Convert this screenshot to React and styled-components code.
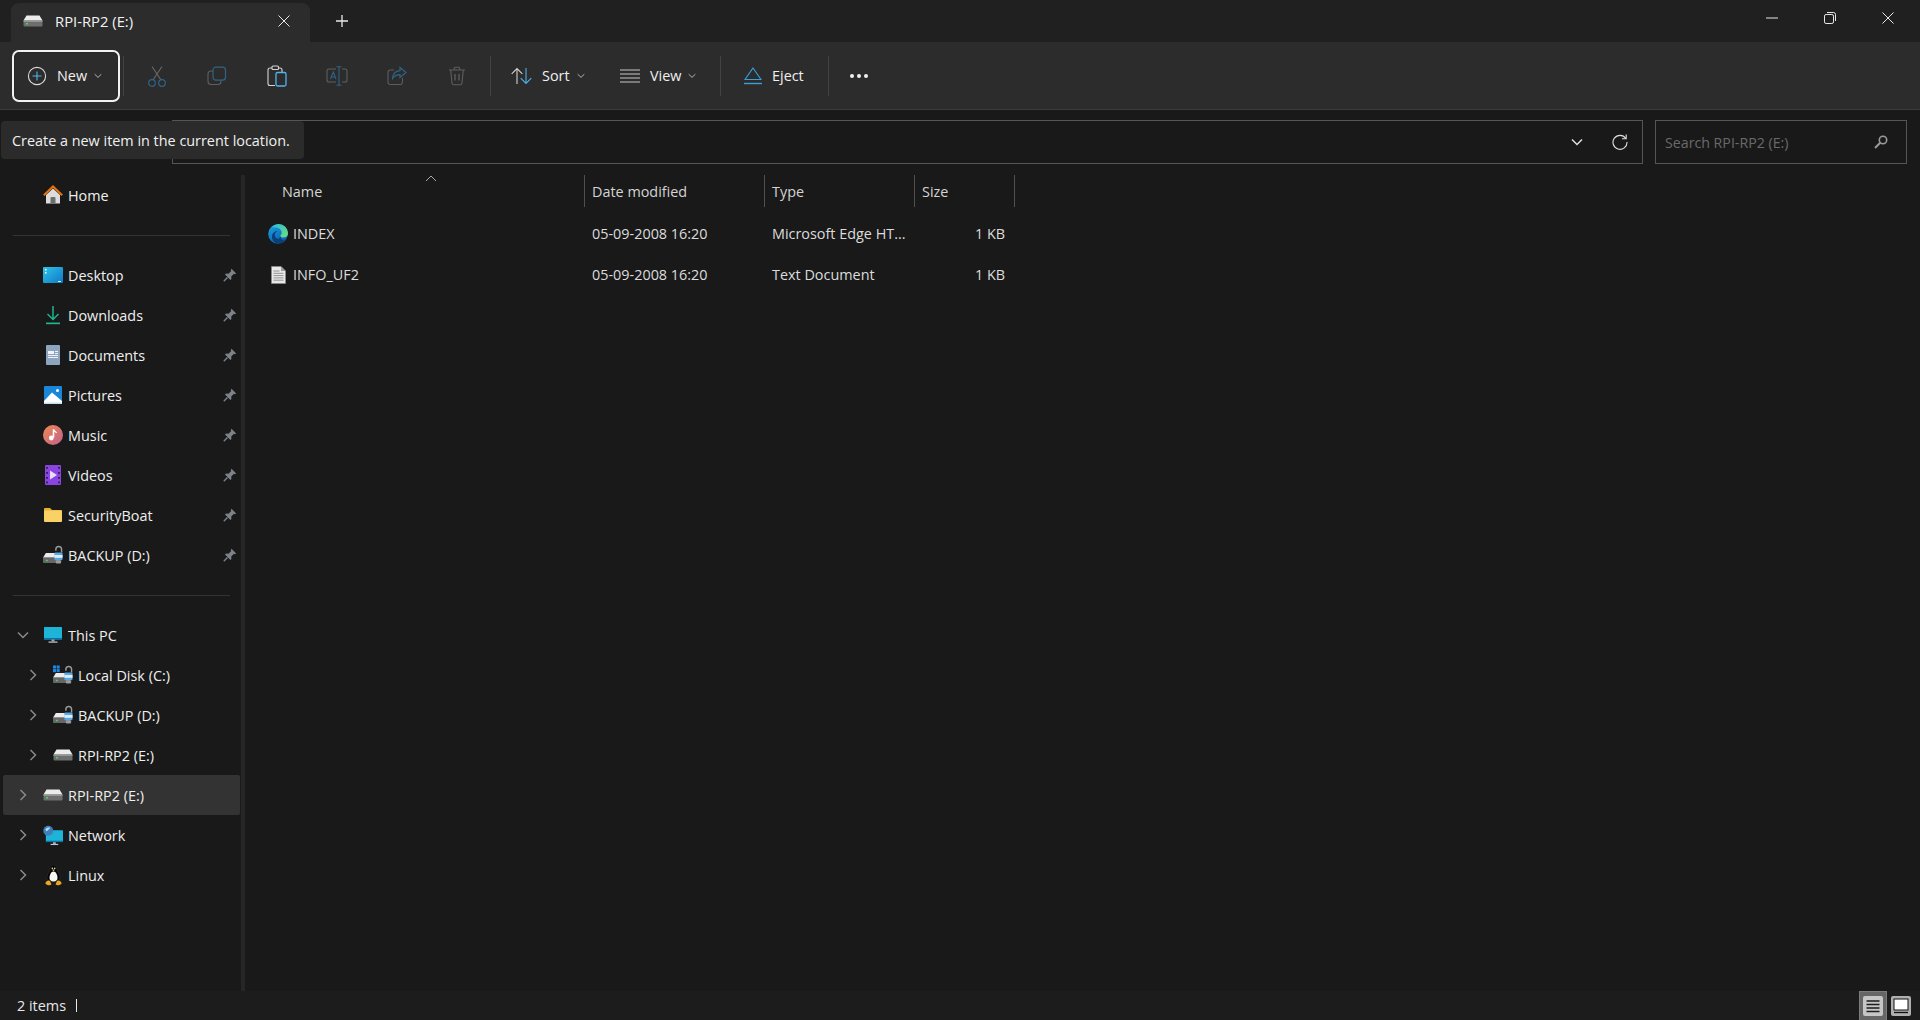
import React from 'react'
import styled, { createGlobalStyle } from 'styled-components'

const GlobalStyle = createGlobalStyle`
  html, body, #root {
    margin: 0;
    height: 100%;
  }
  body {
    background: #191919;
    overflow: hidden;
    font-family: 'Open Sans', 'Noto Sans', sans-serif;
    font-size: 14.4px;
    color: #f0f0f0;
  }
`

const Window = styled.div`
  position: relative;
  width: 1920px;
  height: 1020px;
  display: flex;
  flex-direction: column;
  background: #191919;
`

const TitleBar = styled.div`
  height: 42px;
  flex: none;
  display: flex;
  background: #202020;
  padding: 3px 3px 0 11px;
  box-sizing: border-box;
`

const Tab = styled.div`
  width: 299px;
  display: flex;
  align-items: center;
  background: #2c2c2c;
  border-radius: 8px 8px 0 0;
  padding: 0 20px 3px 12px;
  box-sizing: border-box;
`

const TabLabel = styled.span`
  margin-left: 12px;
  flex: 1;
  font-size: 14.8px;
  font-weight: 500;
  color: #f2f2f2;
`

const NewTab = styled.div`
  width: 64px;
  display: flex;
  align-items: center;
  justify-content: center;
  padding-bottom: 3px;
`

const WindowControls = styled.div`
  margin-left: auto;
  display: flex;
  margin-top: -3px;
`

const ControlButton = styled.div`
  width: 58px;
  height: 36px;
  display: flex;
  align-items: center;
  justify-content: center;
`

const Toolbar = styled.div`
  height: 68px;
  flex: none;
  display: flex;
  align-items: center;
  background: #2c2c2c;
  border-bottom: 1px solid #3c3c3c;
  box-sizing: border-box;
  padding-left: 12px;
`

const NewButton = styled.div`
  width: 108px;
  height: 52px;
  box-sizing: border-box;
  display: flex;
  align-items: center;
  gap: 10px;
  padding-left: 13px;
  border: 2px solid #f2f2f2;
  border-radius: 7px;
  box-shadow: 0 0 1px #000 inset;
`

const Divider = styled.div`
  width: 1px;
  height: 40px;
  background: #434343;
  margin: 0 ${(p) => p.$gap || 0}px;
  flex: none;
`

const IconButton = styled.div`
  width: 60px;
  height: 52px;
  flex: none;
  display: flex;
  align-items: center;
  justify-content: center;
`

const MenuButton = styled.div`
  width: ${(p) => p.$width}px;
  height: 52px;
  flex: none;
  box-sizing: border-box;
  padding-left: ${(p) => p.$pad}px;
  display: flex;
  align-items: center;
  gap: ${(p) => p.$gap}px;
`

const Label = styled.span`
  font-size: 14.4px;
  color: #f0f0f0;
`

const CaretSlot = styled.span`
  display: flex;
  margin-left: -3px;
`

const AddressRow = styled.div`
  height: 65px;
  flex: none;
  display: flex;
  align-items: flex-start;
  padding: 10px 13px 0 172px;
  box-sizing: border-box;
  gap: 12px;
`

const AddressBox = styled.div`
  width: 1471px;
  height: 44px;
  box-sizing: border-box;
  border: 1px solid #555;
  display: flex;
  align-items: center;
  justify-content: flex-end;
  gap: 29px;
  padding: 0 14px 0 0;
`

const SearchBox = styled.div`
  width: 252px;
  height: 44px;
  box-sizing: border-box;
  border: 1px solid #555;
  display: flex;
  align-items: center;
  justify-content: space-between;
  padding: 0 18px 0 9px;
  color: #6a6a6a;
  font-size: 14.2px;
`

const Tooltip = styled.div`
  position: absolute;
  left: 1px;
  top: 121px;
  width: 303px;
  height: 38px;
  box-sizing: border-box;
  display: flex;
  align-items: center;
  padding-left: 11px;
  background: #2b2b2b;
  border-radius: 4px;
  font-size: 14.4px;
  color: #f0f0f0;
  white-space: nowrap;
`

const Body = styled.div`
  flex: 1;
  min-height: 0;
  display: flex;
`

const Sidebar = styled.div`
  width: 245px;
  flex: none;
  box-sizing: border-box;
  border-right: 4px solid #262626;
  padding: 0 0 0 3px;
`

const NavRow = styled.div`
  height: 40px;
  width: 237px;
  box-sizing: border-box;
  display: flex;
  align-items: center;
  padding-left: ${(p) => (p.$level ? 20 : 10)}px;
  padding-right: 3px;
  border-radius: 2px;
  background: ${(p) => (p.$selected ? '#333333' : 'transparent')};
`

const Chevron = styled.div`
  width: 20px;
  flex: none;
  display: flex;
  align-items: center;
  justify-content: center;
`

const NavIcon = styled.div`
  width: 20px;
  height: 20px;
  margin-left: 10px;
  flex: none;
  display: flex;
  align-items: center;
  justify-content: center;
`

const NavText = styled.span`
  margin-left: 5px;
  flex: 1;
  font-size: 14.4px;
  color: #efefef;
  white-space: nowrap;
`

const NavDivider = styled.div`
  height: 1px;
  width: 217px;
  margin: 20px 0 19px 10px;
  background: #333;
`

const Content = styled.div`
  flex: 1;
`

const ColumnGrid = styled.div`
  display: grid;
  grid-template-columns: 340px 180px 150px 100px;
  align-items: center;
`

const Header = styled(ColumnGrid)`
  position: relative;
  height: 32px;
  margin-bottom: 6px;
  color: #d4d4d4;
`

const HeaderCell = styled.div`
  height: 32px;
  display: flex;
  align-items: center;
  padding-left: ${(p) => p.$pad}px;
  border-right: 1px solid #505050;
  font-size: 14.4px;
`

const SortCaret = styled.div`
  position: absolute;
  left: 180px;
  top: 0;
  line-height: 0;
`

const FileRow = styled(ColumnGrid)`
  height: 41px;
  color: #dcdcdc;
  font-size: 14.4px;
`

const NameCell = styled.div`
  display: flex;
  align-items: center;
  gap: 5px;
  padding-left: 23px;
`

const FileIcon = styled.div`
  width: 20px;
  height: 20px;
  display: flex;
  align-items: center;
  justify-content: center;
`

const TextCell = styled.div`
  padding-left: 7px;
  white-space: nowrap;
`

const SizeCell = styled.div`
  text-align: right;
  padding-right: 10px;
`

const StatusBar = styled.div`
  height: 29px;
  flex: none;
  display: flex;
  align-items: center;
  background: #1c1c1c;
  padding-left: 17px;
  font-size: 14.4px;
  color: #e8e8e8;
`

const StatusRule = styled.div`
  width: 1px;
  height: 13px;
  background: #e8e8e8;
  margin-left: 10px;
`

const ViewToggles = styled.div`
  margin-left: auto;
  display: flex;
  align-items: center;
  gap: 4px;
  padding-right: 9px;
`

const ViewToggle = styled.div`
  width: ${(p) => (p.$active ? 28 : 20)}px;
  height: 29px;
  box-sizing: border-box;
  display: flex;
  align-items: center;
  justify-content: center;
  background: ${(p) => (p.$active ? '#666' : 'transparent')};
  border: ${(p) => (p.$active ? '1px solid #7c7c7c' : 'none')};
  border-bottom: none;
`

const Svg = ({ size = 20, w, h, children }) => (
  <svg width={w || size} height={h || size} viewBox={`0 0 ${w || size} ${h || size}`} fill="none">
    {children}
  </svg>
)

const DriveIcon = () => (
  <Svg w={20} h={12}>
    <path d="M3.5 0.5h13L19.5 5.5H.5z" fill="#ececec" />
    <rect x="0.5" y="5.5" width="19" height="6" rx="1" fill="#6e6e6e" />
    <rect x="0.5" y="5.5" width="19" height="1" fill="#bdbdbd" />
    <rect x="3" y="8" width="2" height="1.5" fill="#3ddc5e" />
  </Svg>
)

const LockedDriveIcon = ({ windows }) => (
  <Svg w={21} h={20}>
    <path d="M3 8h12l3 5H0z" fill="#ececec" />
    <rect x="0" y="12.5" width="18" height="6" rx="1" fill="#666" />
    <rect x="3" y="15" width="2" height="1.5" fill="#3ddc5e" />
    <path d="M13.5 5.5V4a3 3 0 0 1 6 0v3.500" stroke="#9a9a9a" strokeWidth="1.5" />
    <rect x="12" y="7.500" width="8.500" height="8" rx="1" fill="#58a8e4" />
    <rect x="12" y="10" width="8.500" height="3" fill="#dcecf8" />
    <rect x="13.500" y="15.500" width="5.500" height="3.500" rx="1" fill="#9c9c9c" />
    {windows && (
      <g fill="#1e88e5">
        <rect x="0" y="0" width="3.200" height="3.200" />
        <rect x="3.800" y="0" width="3.200" height="3.200" />
        <rect x="0" y="3.800" width="3.200" height="3.200" />
        <rect x="3.800" y="3.800" width="3.200" height="3.200" />
      </g>
    )}
  </Svg>
)

const HomeIcon = () => (
  <Svg>
    <path d="M3 10v8.5h14V10L10 3.5z" fill="#dcdcdc" />
    <path d="M7.5 18.5V13a1 1 0 0 1 1-1h3a1 1 0 0 1 1 1v5.5z" fill="#6d6d6d" />
    <path d="M0.8 10.2 10 1.5l9.2 8.7" stroke="#e8730c" strokeWidth="2" />
  </Svg>
)

const DesktopIcon = () => (
  <Svg w={20} h={16}>
    <defs>
      <linearGradient id="deskFill" x1="0" y1="0" x2="1" y2="1">
        <stop offset="0" stopColor="#2cc4e8" />
        <stop offset="1" stopColor="#0f78c8" />
      </linearGradient>
    </defs>
    <rect y="0" width="20" height="16" rx="1" fill="url(#deskFill)" />
    <rect x="2" y="2" width="1.5" height="1.5" fill="#fff" />
    <rect x="2" y="5" width="1.5" height="1.5" fill="#fff" />
    <rect x="15" y="14" width="3" height="1" fill="#dff" />
  </Svg>
)

const DownloadIcon = () => (
  <Svg>
    <path d="M10 1v13M4.5 9 10 14.5 15.5 9" stroke="#1fb48e" strokeWidth="1.5" />
    <rect x="3" y="17.5" width="14" height="1.7" fill="#1fb48e" />
  </Svg>
)

const DocumentsIcon = () => (
  <Svg w={14} h={20}>
    <rect width="14" height="20" rx="1" fill="#8ca4be" />
    <rect x="2" y="6" width="6" height="3" fill="#f0f4f8" />
    <rect x="9" y="6" width="3" height="1" fill="#f0f4f8" />
    <rect x="9" y="8" width="3" height="1" fill="#f0f4f8" />
    <rect x="2" y="10" width="10" height="1" fill="#f0f4f8" />
    <rect x="2" y="12" width="10" height="1" fill="#f0f4f8" />
  </Svg>
)

const PicturesIcon = () => (
  <Svg w={18} h={18}>
    <rect width="18" height="18" rx="1" fill="#1a86d8" />
    <circle cx="13.5" cy="4.5" r="1.5" fill="#fff" />
    <path d="M0 15 8 6.5 18 15v3H0z" fill="#fff" />
    <path d="M0 16.5 18 16.5V18H0z" fill="#bfe0f6" />
  </Svg>
)

const MusicIcon = () => (
  <Svg>
    <defs>
      <linearGradient id="musicFill" x1="0" y1="0" x2="1" y2="1">
        <stop offset="0" stopColor="#ee8a50" />
        <stop offset="1" stopColor="#c2608e" />
      </linearGradient>
    </defs>
    <circle cx="10" cy="10" r="10" fill="url(#musicFill)" />
    <path d="M10.5 4.5v8" stroke="#fff" strokeWidth="1.6" />
    <path d="M10.5 4.5c.5 2 2.5 2 3 3.5" stroke="#fff" strokeWidth="1.3" />
    <circle cx="8.3" cy="13" r="2.4" fill="#fff" />
  </Svg>
)

const VideosIcon = () => (
  <Svg w={16} h={20}>
    <rect width="16" height="20" rx="1" fill="#8a44e0" />
    <g fill="#2a1a44">
      <rect x="1.2" y="2" width="1.6" height="1.8" />
      <rect x="1.2" y="7" width="1.6" height="1.8" />
      <rect x="1.2" y="12" width="1.6" height="1.8" />
      <rect x="1.2" y="16.5" width="1.6" height="1.8" />
      <rect x="13.2" y="2" width="1.6" height="1.8" />
      <rect x="13.2" y="7" width="1.6" height="1.8" />
      <rect x="13.2" y="12" width="1.6" height="1.8" />
      <rect x="13.2" y="16.5" width="1.6" height="1.8" />
    </g>
    <path d="M5 5.5 12 10l-7 4.5z" fill="#e8ddfa" />
  </Svg>
)

const FolderIcon = () => (
  <Svg w={18} h={14}>
    <path d="M0 1a1 1 0 0 1 1-1h5l2 2h9a1 1 0 0 1 1 1v1H0z" fill="#e8b030" />
    <rect y="2.6" width="18" height="11.4" rx="1" fill="#fad165" />
  </Svg>
)

const ThisPcIcon = () => (
  <Svg w={18} h={16}>
    <rect width="18" height="12.5" rx="0.6" fill="#1eb4d8" />
    <rect y="11" width="18" height="1.5" fill="#0e6ea8" />
    <rect x="7.5" y="12.5" width="3" height="2" fill="#9aa8b4" />
    <rect x="4.5" y="14.5" width="9" height="1.2" fill="#c0c8d0" />
  </Svg>
)

const NetworkIcon = () => (
  <Svg w={21} h={21}>
    <rect x="3" y="5" width="18" height="12" rx="0.6" fill="#1eb4d8" />
    <rect x="3" y="16" width="18" height="1.5" fill="#0e6ea8" />
    <rect x="10.5" y="17.5" width="3" height="2" fill="#9aa8b4" />
    <rect x="8" y="19.3" width="8" height="1.2" fill="#c0c8d0" />
    <circle cx="5.5" cy="5.5" r="5.2" fill="#3f7fb8" />
    <path d="M2.5 4C4 2 6 1.6 7.5 2.5 6 4 5 5.5 3.5 6z" fill="#b8dcf2" />
  </Svg>
)

const LinuxIcon = () => (
  <Svg w={17} h={21}>
    <path d="M8.5 0C6 0 5 2 5 4.500c0 2-2.500 4-3 7-.3 2 .5 4 2 5h9c1.500-1 2.300-3 2-5-.5-3-3-5-3-7C12 2 11 0 8.500 0z" fill="#050505" stroke="#3a3a3a" strokeWidth="0.5" />
    <path d="M8.500 6.500c-2.500 0-4 3.500-4 6.500 0 2 1.500 3.500 4 3.500s4-1.500 4-3.500c0-3-1.500-6.500-4-6.500z" fill="#f6f6f6" />
    <circle cx="7.300" cy="3.200" r="0.800" fill="#eee" />
    <circle cx="9.700" cy="3.200" r="0.800" fill="#eee" />
    <path d="M6.800 4.600h3.400L8.500 6.200z" fill="#f0b020" />
    <path d="M0.300 18.500c.7-2.500 3-3.700 4.700-2.500l1.500 3.500c-2.200 1.500-4.500.8-6.200-1zM16.700 18.500c-.7-2.500-3-3.700-4.700-2.500l-1.500 3.500c2.200 1.500 4.500.8 6.200-1z" fill="#eaa81c" />
  </Svg>
)

const PinIcon = () => (
  <Svg size={14}>
    <path d="M8.5.8 13.2 5.5 12 6.2 11 5.8 8.3 8.5l.1 2.5-1 1L2 6.6l1-1 2.5.1 2.7-2.700L7.800 2z" fill="#7c8288" />
    <path d="M4.500 9.500.8 13.200" stroke="#7c8288" strokeWidth="1.400" />
  </Svg>
)

const ChevronIcon = ({ open, color = '#8a8a8a' }) => (
  <Svg w={12} h={12}>
    <path d={open ? 'M1 3.5 6 8.5 11 3.5' : 'M3.5 1 8.5 6 3.5 11'} stroke={color} strokeWidth="1.5" />
  </Svg>
)

const SmallCaret = () => (
  <CaretSlot>
    <Svg w={8} h={6}>
      <path d="M.7 1.2 4 4.400 7.300 1.200" stroke="#b4b4b4" strokeWidth="1" />
    </Svg>
  </CaretSlot>
)

const PlusCircle = () => (
  <Svg>
    <circle cx="10" cy="10" r="8.6" stroke="#d8d8d8" strokeWidth="1.1" />
    <path d="M10 5.5v9M5.5 10h9" stroke="#4fb6ec" strokeWidth="1.1" />
  </Svg>
)

const ScissorsIcon = () => (
  <Svg w={20} h={22}>
    <path d="M5 1.5 14 15M15 1.5 6 15" stroke="#6a6a6a" strokeWidth="1.1" />
    <circle cx="5" cy="18" r="3.3" stroke="#2f6486" strokeWidth="1.2" />
    <circle cx="15" cy="18" r="3.3" stroke="#2f6486" strokeWidth="1.2" />
  </Svg>
)

const CopyIcon = () => (
  <Svg>
    <rect x="1" y="5" width="13" height="13.5" rx="3" stroke="#5e5e5e" strokeWidth="1.1" />
    <rect x="6" y="1.2" width="12.5" height="13" rx="3" fill="#2c2c2c" stroke="#2f6486" strokeWidth="1.2" />
  </Svg>
)

const PasteIcon = () => (
  <Svg w={20} h={22}>
    <path d="M8 20.5H3a2 2 0 0 1-2-2V5a2 2 0 0 1 2-2h10a2 2 0 0 1 2 2v2" stroke="#d4d4d4" strokeWidth="1.1" />
    <rect x="5" y="1" width="6.5" height="3.5" rx="1" fill="#2c2c2c" stroke="#d4d4d4" strokeWidth="1.1" />
    <rect x="9" y="7.5" width="10" height="13.5" rx="1.5" stroke="#4fb6ec" strokeWidth="1.3" />
  </Svg>
)

const RenameIcon = () => (
  <Svg w={22} h={20}>
    <path d="M10 3H3a2 2 0 0 0-2 2v9a2 2 0 0 0 2 2h7M16 3h3a2 2 0 0 1 2 2v9a2 2 0 0 1-2 2h-3" stroke="#5e5e5e" strokeWidth="1.1" />
    <path d="M13 1v18M10.5.8h5M10.5 19.2h5" stroke="#2f6486" strokeWidth="1.1" />
    <path d="M4.500 13 7.300 6l2.700 7M5.400 11h3.800" stroke="#2f6486" strokeWidth="1.1" />
  </Svg>
)

const ShareIcon = () => (
  <Svg w={20} h={20}>
    <path d="M15.5 12v4a2.5 2.5 0 0 1-2.5 2.5H3.5A2.5 2.5 0 0 1 1 16V6.5A2.5 2.5 0 0 1 3.5 4H7" stroke="#5e5e5e" strokeWidth="1.1" />
    <path d="M13 1.5 19 6.5 13 11.5V8.7c-3.6 0-5.6 1.2-7.5 4 .2-4.5 2.8-7.5 7.5-8z" stroke="#2f6486" strokeWidth="1.2" />
  </Svg>
)

const TrashIcon = () => (
  <Svg w={18} h={20}>
    <path d="M1 4h16M6.2 4V2.5a1.3 1.3 0 0 1 1.3-1.3h3a1.3 1.3 0 0 1 1.3 1.3V4" stroke="#5e5e5e" strokeWidth="1.1" />
    <path d="M2.7 4 4 17a2 2 0 0 0 2 1.8h6a2 2 0 0 0 2-1.8L15.3 4" stroke="#5e5e5e" strokeWidth="1.1" />
    <path d="M7 8v6.5M11 8v6.5" stroke="#5e5e5e" strokeWidth="1.3" />
  </Svg>
)

const SortIcon = () => (
  <Svg w={21} h={18}>
    <path d="M6 17V1.5M.7 6.8 6 1.5l5.3 5.3" stroke="#d0d0d0" strokeWidth="1.1" />
    <path d="M15 1v15.5M9.7 11.2 15 16.5l5.3-5.3" stroke="#4fb0e6" strokeWidth="1.1" />
  </Svg>
)

const ViewIcon = () => (
  <Svg w={20} h={14}>
    <path d="M0 1h20M0 5h20M0 9h20M0 13h20" stroke="#c8c8c8" strokeWidth="1.1" />
  </Svg>
)

const EjectIcon = () => (
  <Svg w={18} h={18}>
    <path d="M9 1 17 12.5H1z" stroke="#3c9fd8" strokeWidth="1.1" />
    <path d="M0 16.5h18" stroke="#3c9fd8" strokeWidth="1.4" />
  </Svg>
)

const DotsIcon = () => (
  <Svg w={20} h={4}>
    <circle cx="3" cy="2" r="2" fill="#f2f2f2" />
    <circle cx="10" cy="2" r="2" fill="#f2f2f2" />
    <circle cx="17" cy="2" r="2" fill="#f2f2f2" />
  </Svg>
)

const CloseGlyph = ({ size = 12 }) => (
  <Svg size={size}>
    <path d={`M.5.5 ${size - 0.5} ${size - 0.5}M${size - 0.5} .5 .5 ${size - 0.5}`} stroke="#e8e8e8" strokeWidth="1" />
  </Svg>
)

const RestoreIcon = () => (
  <Svg size={12}>
    <rect x="0.5" y="2.5" width="9" height="9" rx="1.6" stroke="#e8e8e8" />
    <path d="M3 .5h6.5a2 2 0 0 1 2 2V9" stroke="#e8e8e8" />
  </Svg>
)

const RefreshIcon = () => (
  <Svg w={16} h={16}>
    <path d="M13.8 4.4A7 7 0 1 0 15 8" stroke="#e0e0e0" strokeWidth="1.1" />
    <path d="M10 4.8h4.2V.6" stroke="#e0e0e0" strokeWidth="1.1" />
  </Svg>
)

const SearchIcon = () => (
  <Svg size={14}>
    <circle cx="9" cy="5" r="3.7" stroke="#9a9a9a" strokeWidth="1.6" />
    <path d="M6.2 7.8 1 13" stroke="#9a9a9a" strokeWidth="2" />
  </Svg>
)

const EdgeIcon = () => (
  <Svg>
    <defs>
      <linearGradient id="edgeBlue" x1="0" y1="0" x2="0.6" y2="1">
        <stop offset="0" stopColor="#1aa6e4" />
        <stop offset="1" stopColor="#0c5cae" />
      </linearGradient>
      <linearGradient id="edgeGreen" x1="0" y1="0" x2="1" y2="1">
        <stop offset="0" stopColor="#2fb8dc" />
        <stop offset="1" stopColor="#6ee27a" />
      </linearGradient>
    </defs>
    <circle cx="10" cy="10" r="9.8" fill="url(#edgeBlue)" />
    <path d="M4 3C6 .8 8.500 0 10.500 0 16 0 20 4.300 20 9.500c0 2.500-2 4-4.500 4-2 0-3.300-.8-3.300-1.600 0-.8 1.400-1 1.400-3.200C13.600 6 11 3.600 8 3.600 6.500 3.600 5 3.600 4 3z" fill="url(#edgeGreen)" />
    <path d="M12.500 12c-.5 2.500 1.500 4.800 4.500 4.200-1.500 2-4 3.300-6.500 3.300-4 0-6.500-3-6.500-6.500 0-3.500 2.500-6 5.500-6-2 1-3 2.800-2.600 4.800.4 2 2.100 3.300 4 3.300" fill="#0b3f7a" />
  </Svg>
)

const TextFileIcon = () => (
  <Svg w={15} h={18}>
    <path d="M.5.5h9.500L14.500 5v12.500H.5z" fill="#e8e8e8" stroke="#8c8c8c" strokeWidth="0.8" />
    <path d="M10 .5V5h4.500z" fill="#9a9a9a" />
    <path d="M2.500 5h6M2.500 7.300h10M2.500 9.600h10M2.500 11.900h10M2.500 14.200h10" stroke="#8a8a8a" strokeWidth="0.9" />
  </Svg>
)

const ListViewIcon = () => (
  <Svg size={20}>
    <rect width="20" height="20" rx="2" fill="#c6c6c6" />
    <path d="M3.500 5h13M3.500 8.500h13M3.500 12h13M3.500 15.500h13" stroke="#1c1c1c" strokeWidth="1.300" />
  </Svg>
)

const TileViewIcon = () => (
  <Svg size={20}>
    <rect width="20" height="20" rx="2" fill="#b0b0b0" />
    <rect x="3" y="3" width="14" height="11" fill="#fff" stroke="#111" strokeWidth="1" />
    <path d="M3 16.500h14" stroke="#111" strokeWidth="1.300" />
  </Svg>
)

const pinned = [
  { name: 'Desktop', icon: <DesktopIcon /> },
  { name: 'Downloads', icon: <DownloadIcon /> },
  { name: 'Documents', icon: <DocumentsIcon /> },
  { name: 'Pictures', icon: <PicturesIcon /> },
  { name: 'Music', icon: <MusicIcon /> },
  { name: 'Videos', icon: <VideosIcon /> },
  { name: 'SecurityBoat', icon: <FolderIcon /> },
  { name: 'BACKUP (D:)', icon: <LockedDriveIcon /> },
]

const tree = [
  { name: 'This PC', icon: <ThisPcIcon />, open: true },
  { name: 'Local Disk (C:)', icon: <LockedDriveIcon windows />, level: 1 },
  { name: 'BACKUP (D:)', icon: <LockedDriveIcon />, level: 1 },
  { name: 'RPI-RP2 (E:)', icon: <DriveIcon />, level: 1 },
  { name: 'RPI-RP2 (E:)', icon: <DriveIcon />, selected: true },
  { name: 'Network', icon: <NetworkIcon /> },
  { name: 'Linux', icon: <LinuxIcon /> },
]

const files = [
  { name: 'INDEX', icon: <EdgeIcon />, date: '05-09-2008 16:20', type: 'Microsoft Edge HT...', size: '1 KB' },
  { name: 'INFO_UF2', icon: <TextFileIcon />, date: '05-09-2008 16:20', type: 'Text Document', size: '1 KB' },
]

export default function App() {
  return (
    <Window>
      <GlobalStyle />
      <TitleBar>
        <Tab>
          <DriveIcon />
          <TabLabel>RPI-RP2 (E:)</TabLabel>
          <CloseGlyph />
        </Tab>
        <NewTab>
          <Svg size={14}>
            <path d="M7 1v12M1 7h12" stroke="#e8e8e8" strokeWidth="1.3" />
          </Svg>
        </NewTab>
        <WindowControls>
          <ControlButton>
            <Svg w={12} h={2}>
              <path d="M0 1h12" stroke="#e8e8e8" />
            </Svg>
          </ControlButton>
          <ControlButton>
            <RestoreIcon />
          </ControlButton>
          <ControlButton>
            <CloseGlyph />
          </ControlButton>
        </WindowControls>
      </TitleBar>

      <Toolbar>
        <NewButton>
          <PlusCircle />
          <Label>New</Label>
          <SmallCaret />
        </NewButton>
        <Divider $gap={3} />
        <IconButton><ScissorsIcon /></IconButton>
        <IconButton><CopyIcon /></IconButton>
        <IconButton><PasteIcon /></IconButton>
        <IconButton><RenameIcon /></IconButton>
        <IconButton><ShareIcon /></IconButton>
        <IconButton><TrashIcon /></IconButton>
        <Divider $gap={3} />
        <MenuButton $width={119} $pad={17} $gap={10}>
          <SortIcon />
          <Label>Sort</Label>
          <SmallCaret />
        </MenuButton>
        <MenuButton $width={107} $pad={7} $gap={10}>
          <ViewIcon />
          <Label>View</Label>
          <SmallCaret />
        </MenuButton>
        <Divider />
        <MenuButton $width={107} $pad={23} $gap={10}>
          <EjectIcon />
          <Label>Eject</Label>
        </MenuButton>
        <Divider />
        <MenuButton $width={60} $pad={20} $gap={0}>
          <DotsIcon />
        </MenuButton>
      </Toolbar>

      <AddressRow>
        <AddressBox>
          <ChevronIcon open color="#e0e0e0" />
          <RefreshIcon />
        </AddressBox>
        <SearchBox>
          <span>Search RPI-RP2 (E:)</span>
          <SearchIcon />
        </SearchBox>
      </AddressRow>

      <Tooltip>Create a new item in the current location.</Tooltip>

      <Body>
        <Sidebar>
          <NavRow>
            <Chevron />
            <NavIcon><HomeIcon /></NavIcon>
            <NavText>Home</NavText>
          </NavRow>
          <NavDivider />
          {pinned.map((item) => (
            <NavRow key={item.name}>
              <Chevron />
              <NavIcon>{item.icon}</NavIcon>
              <NavText>{item.name}</NavText>
              <PinIcon />
            </NavRow>
          ))}
          <NavDivider />
          {tree.map((item) => (
            <NavRow key={item.name + (item.level || 0)} $level={item.level} $selected={item.selected}>
              <Chevron>
                <ChevronIcon open={item.open} />
              </Chevron>
              <NavIcon>{item.icon}</NavIcon>
              <NavText>{item.name}</NavText>
            </NavRow>
          ))}
        </Sidebar>

        <Content>
          <Header>
            <HeaderCell $pad={37}>Name</HeaderCell>
            <HeaderCell $pad={7}>Date modified</HeaderCell>
            <HeaderCell $pad={7}>Type</HeaderCell>
            <HeaderCell $pad={7}>Size</HeaderCell>
            <SortCaret>
              <Svg w={12} h={7}>
                <path d="M1 6 6 1l5 5" stroke="#a8a8a8" />
              </Svg>
            </SortCaret>
          </Header>
          {files.map((file) => (
            <FileRow key={file.name}>
              <NameCell>
                <FileIcon>{file.icon}</FileIcon>
                {file.name}
              </NameCell>
              <TextCell>{file.date}</TextCell>
              <TextCell>{file.type}</TextCell>
              <SizeCell>{file.size}</SizeCell>
            </FileRow>
          ))}
        </Content>
      </Body>

      <StatusBar>
        2 items
        <StatusRule />
        <ViewToggles>
          <ViewToggle $active><ListViewIcon /></ViewToggle>
          <ViewToggle><TileViewIcon /></ViewToggle>
        </ViewToggles>
      </StatusBar>
    </Window>
  )
}
